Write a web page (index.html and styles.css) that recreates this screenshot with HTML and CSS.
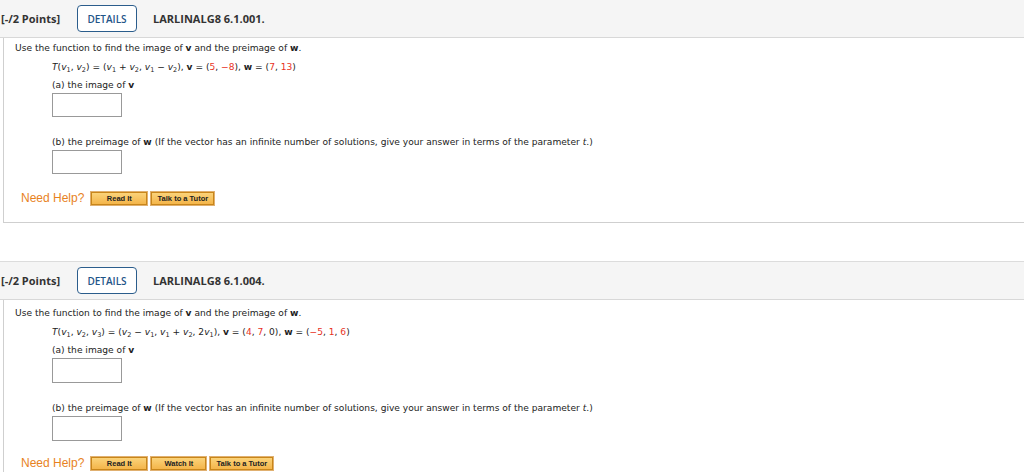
FILE: index.html
```html
<!DOCTYPE html>
<html>
<head>
<meta charset="utf-8">
<link rel="stylesheet" href="styles.css">
</head>
<body>
<div class="question">
  <div class="qhead">
    <span class="points">[-/2 Points]</span>
    <span class="details">DETAILS</span>
    <span class="qid">LARLINALG8 6.1.001.</span>
  </div>
  <div class="qbody">
    <p class="intro">Use the function to find the image of <b>v</b> and the preimage of <b>w</b>.</p>
    <p class="eq"><i>T</i>(<i>v</i><sub>1</sub>, <i>v</i><sub>2</sub>) = (<i>v</i><sub>1</sub> + <i>v</i><sub>2</sub>, <i>v</i><sub>1</sub> − <i>v</i><sub>2</sub>), <b>v</b> = (<span class="r">5</span>, <span class="r">−8</span>), <b>w</b> = (<span class="r">7</span>, <span class="r">13</span>)</p>
    <p class="part">(a) the image of <b>v</b></p>
    <div class="box"></div>
    <p class="part partb">(b) the preimage of <b>w</b> (If the vector has an infinite number of solutions, give your answer in terms of the parameter <i>t</i>.)</p>
    <div class="box"></div>
    <div class="help">
      <span class="need">Need Help?</span>
      <span class="btn w58">Read It</span>
      <span class="btn w65">Talk to a Tutor</span>
    </div>
  </div>
</div>
<div class="question second">
  <div class="qhead">
    <span class="points">[-/2 Points]</span>
    <span class="details">DETAILS</span>
    <span class="qid">LARLINALG8 6.1.004.</span>
  </div>
  <div class="qbody">
    <p class="intro">Use the function to find the image of <b>v</b> and the preimage of <b>w</b>.</p>
    <p class="eq"><i>T</i>(<i>v</i><sub>1</sub>, <i>v</i><sub>2</sub>, <i>v</i><sub>3</sub>) = (<i>v</i><sub>2</sub> − <i>v</i><sub>1</sub>, <i>v</i><sub>1</sub> + <i>v</i><sub>2</sub>, 2<i>v</i><sub>1</sub>), <b>v</b> = (<span class="r">4</span>, <span class="r">7</span>, 0), <b>w</b> = (<span class="r">−5</span>, <span class="r">1</span>, <span class="r">6</span>)</p>
    <p class="part">(a) the image of <b>v</b></p>
    <div class="box"></div>
    <p class="part partb">(b) the preimage of <b>w</b> (If the vector has an infinite number of solutions, give your answer in terms of the parameter <i>t</i>.)</p>
    <div class="box"></div>
    <div class="help">
      <span class="need">Need Help?</span>
      <span class="btn w58">Read It</span>
      <span class="btn w56">Watch It</span>
      <span class="btn w65">Talk to a Tutor</span>
    </div>
  </div>
</div>
</body>
</html>
```
FILE: styles.css
```css
html, body {
  margin: 0;
  padding: 0;
  background: #fff;
}
body {
  width: 1024px;
  height: 472px;
  overflow: hidden;
}
.question {
  width: 1040px;
}
.second {
  margin-top: 38px;
  border-top: 1px solid #dcdcdc;
}
.qhead {
  height: 37px;
  background: #f5f5f5;
  border-bottom: 1px solid #d8d8d8;
  display: flex;
  align-items: center;
  font-family: "Open Sans", sans-serif;
  font-size: 11px;
  color: #333;
}
.points {
  font-weight: 700;
  width: 77px;
  padding-left: 1px;
  box-sizing: border-box;
}
.details {
  width: 60px;
  height: 27px;
  box-sizing: border-box;
  border: 1px solid #2b5d8c;
  border-radius: 4px;
  background: #fff;
  color: #1f5588;
  font-size: 10px;
  font-weight: 600;
  display: flex;
  align-items: center;
  justify-content: center;
  margin-right: 16px;
}
.qid {
  font-weight: 700;
  color: #333;
}
.qbody {
  margin-left: 3px;
  border-left: 1px solid #cfcfcf;
  border-bottom: 1px solid #cfcfcf;
  padding: 4px 0 17px 11px;
  font-family: "DejaVu Sans", Verdana, sans-serif;
  font-size: 9.1px;
  color: #222;
}
.second .qbody {
  border-bottom: none;
  padding-top: 7px;
}
.qbody p {
  margin: 0;
  line-height: 12px;
}
.intro {
  padding-bottom: 7px;
}
.eq {
  padding-left: 37px;
  padding-bottom: 6px;
}
.part {
  padding-left: 37px;
}
.partb {
  margin-top: 19px !important;
}
.second .box {
  height: 25px;
}
.second .help {
  margin-top: 15px;
}
sub {
  font-size: 6.5px;
  line-height: 0;
  vertical-align: -2px;
}
.r {
  color: #e8321e;
}
.box {
  margin: 2px 0 0 37px;
  width: 70px;
  height: 24px;
  box-sizing: border-box;
  border: 1px solid #999;
  background: #fff;
}
.help {
  display: flex;
  align-items: center;
  margin-top: 17px;
  padding-left: 6px;
}
.need {
  font-family: "Liberation Sans", Arial, sans-serif;
  font-size: 12px;
  color: #e8821e;
  margin-right: 7px;
}
.btn {
  height: 13px;
  box-sizing: border-box;
  border: 1px solid #c8861a;
  outline: 1px solid #e0b070;
  background: linear-gradient(#fbd37a, #f4b54a);
  font-family: "Liberation Sans", Arial, sans-serif;
  font-weight: 700;
  font-size: 7.5px;
  color: #222;
  display: flex;
  align-items: center;
  justify-content: center;
  margin-right: 4px;
}
.w58 { width: 56px; }
.w56 { width: 55px; }
.w65 { width: 63px; }
```
